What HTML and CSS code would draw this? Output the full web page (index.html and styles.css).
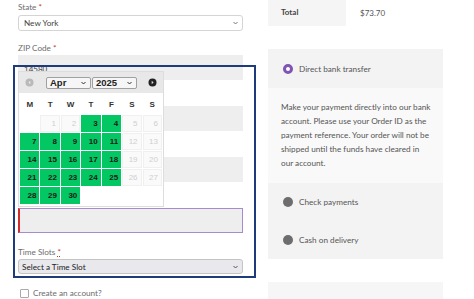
FILE: index.html
```html
<!DOCTYPE html>
<html>
<head>
<meta charset="utf-8">
<link rel="stylesheet" href="styles.css">
</head>
<body>
<div class="page">
  <div class="left">
    <div class="field first">
      <div class="label">State <span class="req">*</span></div>
      <div class="select white"><span>New York</span><svg class="chev" width="5" height="4" viewBox="0 0 5 4"><path d="M0.5 1 L2.5 3 L4.5 1" fill="none" stroke="#777" stroke-width="1"/></svg></div>
    </div>
    <div class="field">
      <div class="label">ZIP Code <span class="req">*</span></div>
      <div class="input zip">14580</div>
    </div>
    <div class="field">
      <div class="label"></div>
      <div class="input"></div>
    </div>
    <div class="field">
      <div class="label"></div>
      <div class="input"></div>
    </div>
    <div class="field">
      <div class="label"></div>
      <div class="input invalid"></div>
    </div>
    <div class="field slots">
      <div class="label">Time Slots <span class="req dotted">*</span></div>
      <div class="select grey"><span>Select a Time Slot</span><svg class="chev" width="5" height="4" viewBox="0 0 5 4"><path d="M0.5 1 L2.5 3 L4.5 1" fill="none" stroke="#555" stroke-width="1"/></svg></div>
    </div>
    <div class="check"><span class="box"></span><span>Create an account?</span></div>

    <div class="frame"></div>

    <div class="datepicker">
      <div class="dp-head">
        <svg class="dp-nav" width="9" height="9" viewBox="0 0 9 9"><circle cx="4.5" cy="4.5" r="4" fill="#b9b9b9"/><path d="M5.3 2.8 L3.4 4.5 L5.3 6.2 Z" fill="#e8e8e8"/></svg>
        <div class="dp-sel month"><span>Apr</span><svg width="5" height="4" viewBox="0 0 5 4"><path d="M0.5 1 L2.5 3 L4.5 1" fill="none" stroke="#333" stroke-width="1"/></svg></div>
        <div class="dp-sel year"><span>2025</span><svg width="5" height="4" viewBox="0 0 5 4"><path d="M0.5 1 L2.5 3 L4.5 1" fill="none" stroke="#333" stroke-width="1"/></svg></div>
        <svg class="dp-nav next" width="9" height="9" viewBox="0 0 9 9"><circle cx="4.5" cy="4.5" r="4" fill="#222"/><path d="M3.7 2.8 L5.6 4.5 L3.7 6.2 Z" fill="#ddd"/></svg>
      </div>
      <div class="dp-days">
        <span>M</span><span>T</span><span>W</span><span>T</span><span>F</span><span>S</span><span>S</span>
      </div>
      <div class="dp-grid">
        <span class="e"></span><span class="d">1</span><span class="d">2</span><span class="g">3</span><span class="g">4</span><span class="d">5</span><span class="d">6</span>
        <span class="g">7</span><span class="g">8</span><span class="g">9</span><span class="g">10</span><span class="g">11</span><span class="d">12</span><span class="d">13</span>
        <span class="g">14</span><span class="g">15</span><span class="g">16</span><span class="g">17</span><span class="g">18</span><span class="d">19</span><span class="d">20</span>
        <span class="g">21</span><span class="g">22</span><span class="g">23</span><span class="g">24</span><span class="g">25</span><span class="d">26</span><span class="d">27</span>
        <span class="g">28</span><span class="g">29</span><span class="g">30</span><span class="e"></span><span class="e"></span><span class="e"></span><span class="e"></span>
      </div>
    </div>
  </div>

  <div class="right">
    <div class="total">
      <div class="t-label">Total</div>
      <div class="t-value">$73.70</div>
    </div>
    <div class="payment">
      <div class="method"><span class="radio on"></span><span>Direct bank transfer</span></div>
      <div class="desc">Make your payment directly into our bank<br>account. Please use your Order ID as the<br>payment reference. Your order will not be<br>shipped until the funds have cleared in<br>our account.</div>
      <div class="method"><span class="radio"></span><span>Check payments</span></div>
      <div class="method"><span class="radio"></span><span>Cash on delivery</span></div>
    </div>
    <div class="after"></div>
  </div>
</div>
</body>
</html>
```

FILE: styles.css
```css
html, body {
  margin: 0;
  padding: 0;
}
body {
  width: 474px;
  height: 299px;
  overflow: hidden;
  background: #fff;
  font-family: Lato, "Noto Sans", sans-serif;
  color: #555;
}
.page {
  display: flex;
  gap: 25px;
  padding-left: 18px;
}
.left {
  width: 225px;
  position: relative;
  padding-top: 1px;
}
.field {
  display: flex;
  flex-direction: column;
  margin-bottom: 13px;
}
.field.first {
  margin-bottom: 11px;
}
.label {
  font-size: 8.2px;
  line-height: 12px;
  height: 13px;
  color: #6d6d6d;
}
.first .label {
  height: 14px;
}
.req {
  color: #c0392b;
}
.req.dotted {
  text-decoration: underline dotted;
}
.select {
  display: flex;
  align-items: center;
  justify-content: space-between;
  box-sizing: border-box;
  height: 16px;
  padding: 0 4px 0 5px;
  font-size: 8.2px;
  color: #444;
  border: 1px solid #d4d4d4;
  border-radius: 3px;
}
.select.white {
  background: #fff;
}
.select.grey {
  height: 15px;
  padding-left: 3px;
  background: #e9e9ed;
  border-color: #c4c4c4;
  color: #222;
}
.input {
  box-sizing: border-box;
  height: 25px;
  background: #eeeeee;
  padding: 7px 6px;
  font-size: 8px;
  line-height: 11px;
  color: #444;
}
.input.zip {
  padding-top: 9px;
}
.input.invalid {
  border: 1px solid #a78bd0;
  border-left: 2px solid #d12b2b;
}
.slots {
  margin-bottom: 14px;
}
.check {
  display: flex;
  align-items: center;
  gap: 4px;
  padding-left: 2px;
  font-size: 8.2px;
  color: #6d6d6d;
  line-height: 10px;
}
.check .box {
  width: 7px;
  height: 7px;
  border: 1px solid #aaa;
  border-radius: 1px;
  background: #fff;
}

/* highlight frame */
.frame {
  position: absolute;
  left: -5px;
  top: 65px;
  width: 243px;
  height: 213px;
  box-sizing: border-box;
  border: 2px solid #1e3c7c;
}

/* datepicker popup */
.datepicker {
  position: absolute;
  left: 0;
  top: 71px;
  width: 146px;
  height: 136px;
  box-sizing: border-box;
  background: #fff;
  border: 1px solid #ddd;
  font-family: "Liberation Sans", Arial, sans-serif;
}
.dp-head {
  height: 21px;
  background: #e8e8e8;
  display: flex;
  align-items: center;
  padding: 0 6px;
}
.dp-nav {
  flex: none;
}
.dp-head .month {
  margin-left: 12px;
  width: 45px;
}
.dp-head .year {
  margin-left: 1px;
  width: 45px;
}
.dp-head .next {
  margin-left: auto;
}
.dp-sel {
  box-sizing: border-box;
  height: 12px;
  display: flex;
  align-items: center;
  justify-content: space-between;
  padding: 0 4px 0 3px;
  border: 1px solid #a0a0a0;
  border-radius: 2px;
  background: #f6f6f6;
  font-size: 9.5px;
  font-weight: bold;
  color: #222;
}
.dp-days {
  display: grid;
  grid-template-columns: repeat(7, 1fr);
  column-gap: 1px;
  padding: 0 1px;
  height: 22px;
  align-items: center;
  text-align: center;
  font-size: 8px;
  font-weight: bold;
  color: #333;
}
.dp-grid {
  display: grid;
  grid-template-columns: repeat(7, 1fr);
  grid-auto-rows: 17px;
  gap: 1px;
  padding: 0 1px;
}
.dp-grid span {
  box-sizing: border-box;
  text-align: right;
  padding-right: 3px;
  font-size: 8px;
  line-height: 17px;
}
.dp-grid .g {
  background: #03c762;
  color: #1a1a1a;
  font-weight: bold;
}
.dp-grid .d {
  background: #fafafa;
  border: 1px solid #f0f0f0;
  line-height: 15px;
  color: #cfcfcf;
}

/* right column */
.right {
  width: 175px;
}
.total {
  display: flex;
  height: 26px;
  align-items: center;
  font-size: 8px;
}
.t-label {
  width: 78px;
  height: 26px;
  box-sizing: border-box;
  padding-left: 13px;
  line-height: 24px;
  background: #f5f5f5;
  font-weight: bold;
  color: #444;
}
.t-value {
  padding-left: 14px;
  line-height: 24px;
  color: #555;
}
.payment {
  margin-top: 23px;
  background: #f3f3f3;
  font-size: 8.2px;
  color: #555;
}
.method {
  height: 38px;
  display: flex;
  align-items: center;
  gap: 6px;
  padding-left: 15px;
}
.method:first-child {
  height: 39px;
}
.radio {
  width: 10px;
  height: 10px;
  border-radius: 50%;
  background: #6d6d6d;
  box-sizing: border-box;
}
.radio.on {
  background: #fff;
  border: 3px solid #7f54b3;
}
.desc {
  background: #f9f9f9;
  padding: 12px 8px 13px 13px;
  font-size: 8.2px;
  line-height: 14px;
  white-space: nowrap;
  color: #555;
}
.after {
  margin-top: 23px;
  height: 20px;
  background: #f6f6f6;
}
```
